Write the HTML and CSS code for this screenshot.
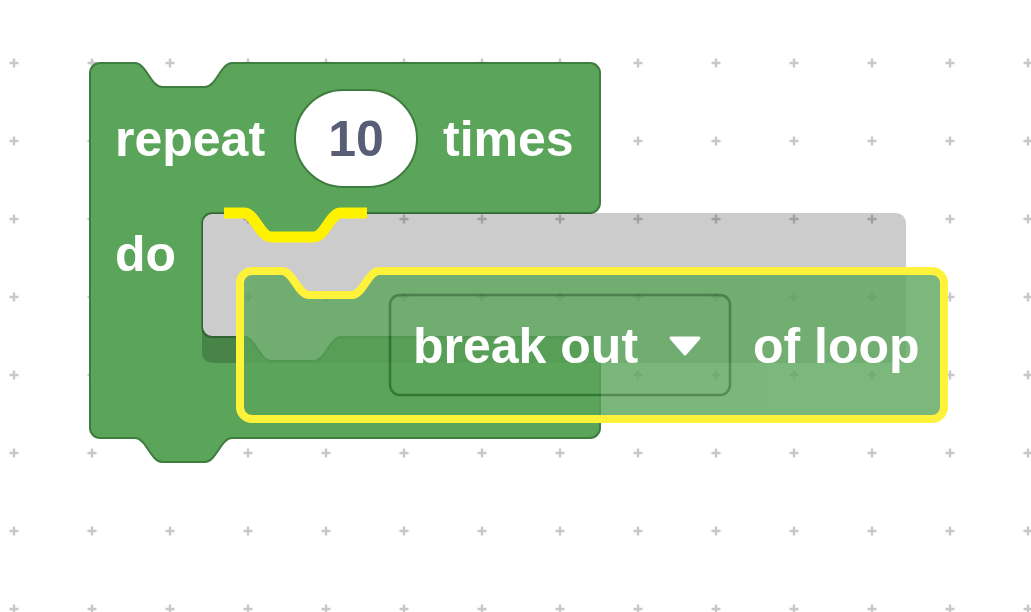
FILE: index.html
```html
<!DOCTYPE html>
<html lang="en">
<head>
<meta charset="utf-8">
<title>Blockly workspace</title>
<link rel="stylesheet" href="styles.css">
</head>
<body>
<main class="workspace">
  <svg class="canvas" width="1031" height="612" viewBox="0 0 1031 612">
    <defs>
      <pattern id="grid" patternUnits="userSpaceOnUse" x="-25" y="24" width="78" height="78">
        <path class="grid-cross" d="M34.5 39H43.5M39 34.5V43.5"/>
      </pattern>
    </defs>
    <rect class="grid" x="0" y="0" width="1031" height="612"/>

    <!-- repeat block -->
    <g class="block block-repeat">
      <path class="block-path" d="M90 73A10 10 0 0 1 100 63H135c11 0 16 24 27 24h43c11 0 16-24 27-24H590A10 10 0 0 1 600 73V203A10 10 0 0 1 590 213H341c-11 0-16 24-27 24h-43c-11 0-16-24-27-24H212A10 10 0 0 0 202 223V327A10 10 0 0 0 212 337H244c11 0 16 24 27 24h43c11 0 16-24 27-24H590A10 10 0 0 1 600 347V428A10 10 0 0 1 590 438H232c-11 0-16 24-27 24h-43c-11 0-16-24-27-24H100A10 10 0 0 1 90 428Z"/>
      <text class="block-text" x="115" y="156">repeat</text>
      <rect class="field-number-bg" x="295" y="90" width="122" height="97" rx="48.5" ry="48.5"/>
      <text class="block-text field-number-text" x="356" y="156" text-anchor="middle">10</text>
      <text class="block-text" x="443" y="156">times</text>
      <text class="block-text" x="115" y="271">do</text>
    </g>

    <!-- insertion marker -->
    <path class="marker" d="M202 223A10 10 0 0 1 212 213H244c11 0 16 24 27 24h43c11 0 16-24 27-24H896A10 10 0 0 1 906 223V353A10 10 0 0 1 896 363H212A10 10 0 0 1 202 353Z"/>

    <!-- connection highlight -->
    <path class="connection-highlight" d="M224 213H244c11 0 16 24 27 24h43c11 0 16-24 27-24H367"/>

    <!-- dragged block: break out of loop -->
    <g class="drag-group">
      <path class="drag-fill" d="M240 283A12 12 0 0 1 252 271H282c11 0 16 24 27 24h43c11 0 16-24 27-24H932A12 12 0 0 1 944 283V407A12 12 0 0 1 932 419H252A12 12 0 0 1 240 407Z"/>
      <rect class="dropdown-outline" x="390" y="295" width="340" height="100" rx="10" ry="10"/>
    </g>
    <path class="selected-outline" d="M240 283A12 12 0 0 1 252 271H282c11 0 16 24 27 24h43c11 0 16-24 27-24H932A12 12 0 0 1 944 283V407A12 12 0 0 1 932 419H252A12 12 0 0 1 240 407Z"/>
    <g class="drag-labels">
      <text class="block-text" x="413" y="363">break out</text>
      <polygon class="dropdown-arrow" points="671,338 699,338 685,354"/>
      <text class="block-text" x="753" y="363">of loop</text>
    </g>
  </svg>
</main>
</body>
</html>
```

FILE: styles.css
```css
html,
body {
  margin: 0;
  padding: 0;
  background: #ffffff;
}

.workspace {
  width: 1031px;
  height: 612px;
  overflow: hidden;
}

.canvas {
  display: block;
}

.grid {
  fill: url(#grid);
}

.grid-cross {
  fill: none;
  stroke: #c8c8c8;
  stroke-width: 2.4;
}

.block-path {
  fill: #5ba55b;
  stroke: #3f7c3f;
  stroke-width: 2;
}

.block-text {
  font-family: "Liberation Sans", Arial, Helvetica, sans-serif;
  font-weight: 700;
  font-size: 50px;
  fill: #ffffff;
}

.field-number-bg {
  fill: #ffffff;
  stroke: #3f7c3f;
  stroke-width: 2;
}

.field-number-text {
  fill: #575e75;
}

.marker {
  fill: #000000;
  fill-opacity: 0.2;
}

.connection-highlight {
  fill: none;
  stroke: #fff200;
  stroke-width: 11;
}

.drag-group {
  opacity: 0.8;
}

.drag-fill {
  fill: #5ba55b;
}

.dropdown-outline {
  fill: none;
  stroke: #2f6d2f;
  stroke-width: 2.5;
}

.dropdown-arrow {
  fill: #ffffff;
  stroke: #ffffff;
  stroke-width: 3;
  stroke-linejoin: round;
}

.selected-outline {
  fill: none;
  stroke: #fff23a;
  stroke-width: 8;
}
```
